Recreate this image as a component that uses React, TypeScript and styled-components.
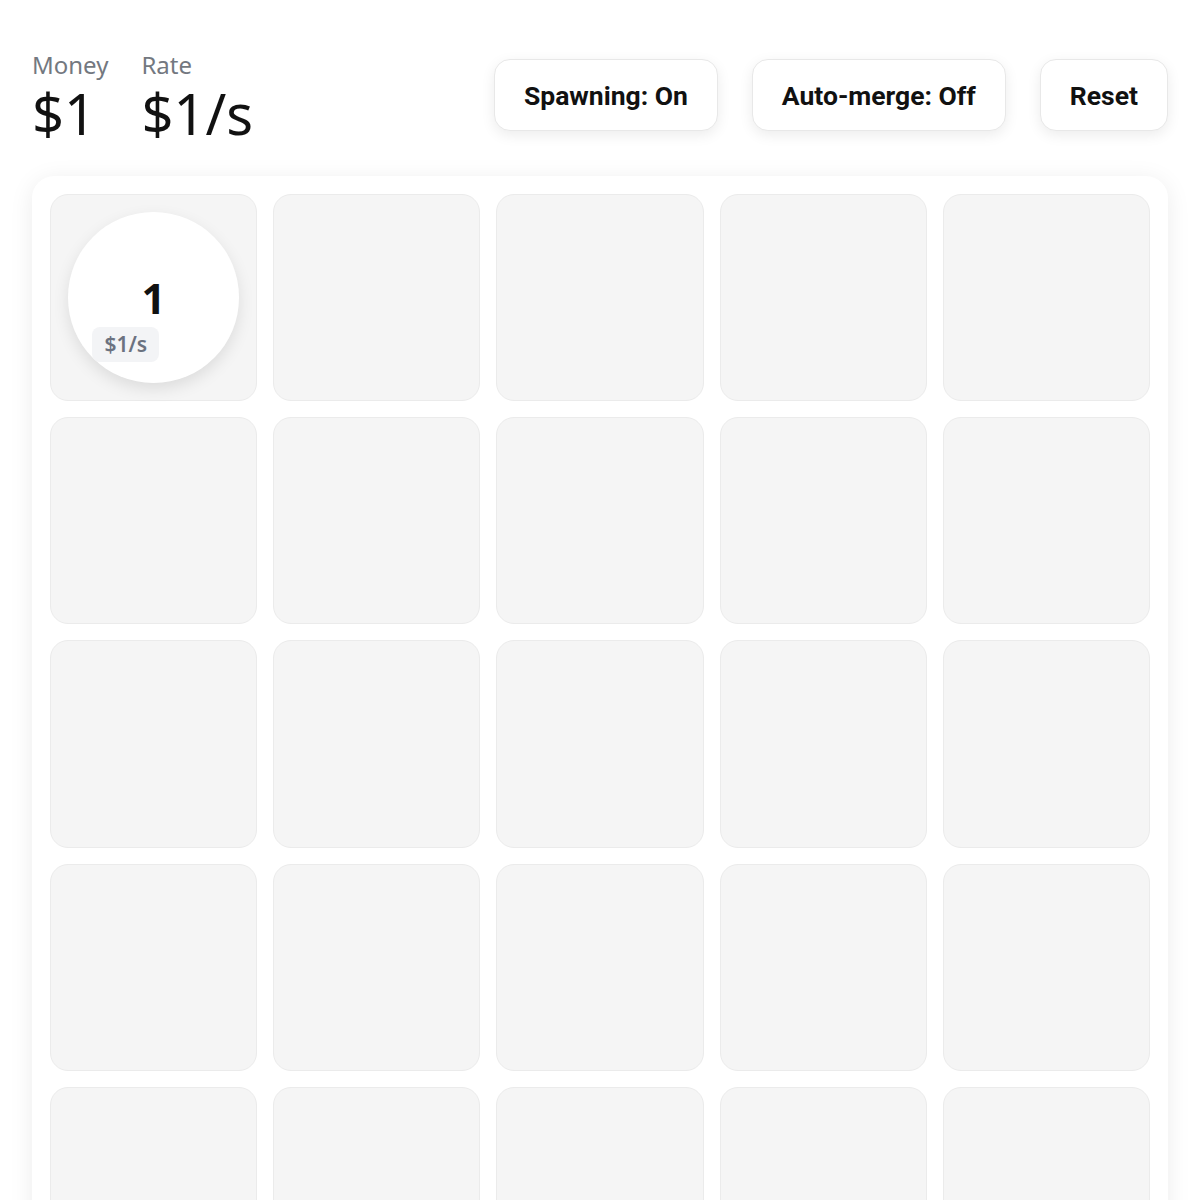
import React from "react";
import styled, { createGlobalStyle } from "styled-components";

const Global = createGlobalStyle`
  html, body { margin: 0; padding: 0; background: #ffffff; }
  body { font-family: "Noto Sans", "Open Sans", sans-serif; color: #111111; }
  * { box-sizing: border-box; }
`;

const Page = styled.div`
  padding: 48px 32px 32px 32px;
  display: flex;
  flex-direction: column;
  gap: 25px;
`;

const Header = styled.header`
  display: flex;
  align-items: flex-start;
  justify-content: space-between;
`;

const Stats = styled.div`
  display: flex;
  gap: 33px;
`;

const Stat = styled.div`
  display: flex;
  flex-direction: column;
`;

const StatLabel = styled.span`
  font-size: 24px;
  line-height: 33px;
  color: #737880;
`;

const StatValue = styled.span`
  font-size: 56px;
  line-height: 76px;
  margin-top: -6px;
  color: #111111;
`;

const Controls = styled.div`
  display: flex;
  gap: 34px;
  padding-top: 11px;
`;

const Button = styled.button`
  height: 72px;
  padding: 0 29px;
  border: 1px solid #e8e8e8;
  border-radius: 16px;
  background: #ffffff;
  box-shadow: 0 4px 14px rgba(0, 0, 0, 0.08);
  font-family: Roboto, "Noto Sans", sans-serif;
  font-weight: 700;
  font-size: 26.5px;
  color: #111111;
  cursor: pointer;
`;

const Board = styled.div`
  background: #ffffff;
  border-radius: 22px;
  box-shadow: 0 4px 24px rgba(0, 0, 0, 0.08);
  padding: 18px;
  display: grid;
  grid-template-columns: repeat(5, 1fr);
  gap: 16px;
`;

const Cell = styled.div`
  position: relative;
  aspect-ratio: 1 / 1;
  background: #f5f5f5;
  border: 1px solid #ebebeb;
  border-radius: 18px;
  display: flex;
  align-items: center;
  justify-content: center;
`;

const Token = styled.div`
  position: relative;
  width: 83%;
  aspect-ratio: 1 / 1;
  border-radius: 50%;
  background: #ffffff;
  box-shadow: 0 6px 16px rgba(0, 0, 0, 0.1);
  display: flex;
  align-items: center;
  justify-content: center;
`;

const Level = styled.span`
  font-size: 42px;
  font-weight: 700;
  line-height: 1;
  color: #111111;
`;

const RateBadge = styled.span`
  position: absolute;
  left: 24px;
  bottom: 21px;
  padding: 2px 12px;
  background: #f3f4f6;
  border-radius: 8px;
  font-size: 21px;
  font-weight: 600;
  line-height: 31px;
  color: #6b7280;
`;

export default function App() {
  const cells = Array.from({ length: 25 }, (_, i) => i);
  return (
    <>
      <Global />
      <Page>
        <Header>
          <Stats>
            <Stat>
              <StatLabel>Money</StatLabel>
              <StatValue>$1</StatValue>
            </Stat>
            <Stat>
              <StatLabel>Rate</StatLabel>
              <StatValue>$1/s</StatValue>
            </Stat>
          </Stats>
          <Controls>
            <Button>Spawning: On</Button>
            <Button>Auto-merge: Off</Button>
            <Button>Reset</Button>
          </Controls>
        </Header>
        <Board>
          {cells.map((i) => (
            <Cell key={i}>
              {i === 0 && (
                <Token>
                  <Level>1</Level>
                  <RateBadge>$1/s</RateBadge>
                </Token>
              )}
            </Cell>
          ))}
        </Board>
      </Page>
    </>
  );
}
